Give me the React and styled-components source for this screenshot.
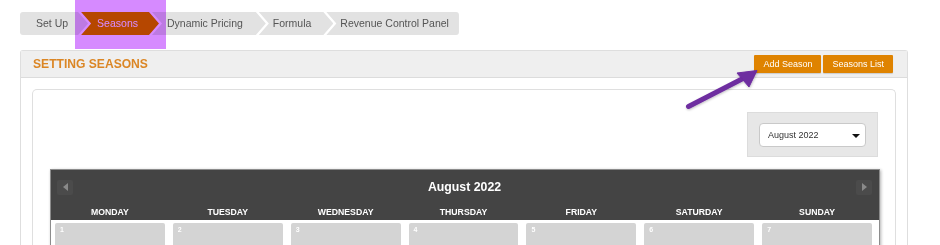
import React from "react";
import styled, { createGlobalStyle } from "styled-components";

const Global = createGlobalStyle`
  html, body { margin: 0; padding: 0; background: #fff; }
  body { font-family: "Liberation Sans", Arial, sans-serif; }
  * { box-sizing: border-box; }
`;

const Page = styled.div`
  position: relative;
  padding: 12px 32px 0 20px;
  height: 245px;
  overflow: hidden;
`;

const Crumbs = styled.nav`
  display: flex;
  height: 23px;
`;

const Crumb = styled.div`
  height: 23px;
  line-height: 23px;
  font-size: 10.5px;
  white-space: nowrap;
  color: ${(p) => (p.$active ? "#fff" : "#555")};
  background: ${(p) => (p.$active ? "#d98200" : "#e2e2e2")};
  padding: 0 ${(p) => p.$pr}px 0 ${(p) => p.$pl}px;
  margin-left: ${(p) => (p.$first ? 0 : -7)}px;
  border-radius: ${(p) => (p.$first ? "3px 0 0 3px" : p.$last ? "0 3px 3px 0" : "0")};
  clip-path: ${(p) =>
    p.$first
      ? "polygon(0 0, calc(100% - 10px) 0, 100% 50%, calc(100% - 10px) 100%, 0 100%)"
      : p.$last
      ? "polygon(0 0, 100% 0, 100% 100%, 0 100%, 10px 50%)"
      : "polygon(0 0, calc(100% - 10px) 0, 100% 50%, calc(100% - 10px) 100%, 0 100%, 10px 50%)"};
`;

const Highlight = styled.div`
  position: absolute;
  left: 75px;
  top: 0;
  width: 91px;
  height: 49px;
  background: #d68aff;
  mix-blend-mode: multiply;
  pointer-events: none;
`;

const Panel = styled.section`
  margin-top: 15px;
  width: 888px;
  border: 1px solid #dedede;
  border-radius: 3px 3px 0 0;
  border-bottom: none;
`;

const PanelHeader = styled.header`
  height: 27px;
  background: #efefef;
  border-bottom: 1px solid #dcdcdc;
  display: flex;
  align-items: center;
  justify-content: space-between;
  padding: 0 14px 0 12px;
`;

const PanelTitle = styled.h2`
  margin: 0;
  font-size: 12.1px;
  font-weight: bold;
  color: #db8625;
  letter-spacing: 0;
`;

const Actions = styled.div`
  display: flex;
  gap: 2px;
  margin-top: -1px;
`;

const ActionButton = styled.button`
  height: 18px;
  padding: 0 ${(p) => p.$px}px;
  font-family: inherit;
  font-size: 9px;
  color: #fff;
  background: #df8300;
  border: none;
  border-radius: 1px;
  box-shadow: 0 1px 1px rgba(0, 0, 0, 0.15);
  cursor: pointer;
`;

const PanelBody = styled.div`
  padding: 11px 11px 0 11px;
`;

const Card = styled.div`
  border: 1px solid #dfdfdf;
  border-bottom: none;
  border-radius: 5px 5px 0 0;
  padding: 22px 15px 0 17px;
  height: 170px;
`;

const FilterRow = styled.div`
  display: flex;
  justify-content: flex-end;
  padding-right: 2px;
`;

const FilterBox = styled.div`
  width: 131px;
  height: 45px;
  background: #e7e7e7;
  border: 1px solid #dcdcdc;
  padding: 10px 11px;
`;

const SelectBox = styled.div`
  height: 24px;
  background: #fff;
  border: 1px solid #c9c9c9;
  border-radius: 4px;
  display: flex;
  align-items: center;
  justify-content: space-between;
  padding: 0 5px 0 8px;
  font-size: 9px;
  color: #333;
`;

const Caret = styled.span`
  width: 0;
  height: 0;
  border-left: 4px solid transparent;
  border-right: 4px solid transparent;
  border-top: 4px solid #111;
  margin-top: 1px;
`;

const Calendar = styled.div`
  margin-top: 12px;
  border: 1px solid #8c8c8c;
  box-shadow: 1px 1px 3px rgba(0, 0, 0, 0.3);
  background: #fff;
`;

const CalHeader = styled.div`
  background: #444;
  padding: 8px 0 0 0;
`;

const NavRow = styled.div`
  display: grid;
  grid-template-columns: 16px 1fr 16px;
  align-items: center;
  height: 18px;
  padding: 0 7px 0 6px;
`;

const NavButton = styled.button`
  width: 16px;
  height: 15px;
  padding: 0;
  border: none;
  border-radius: 2px;
  background: #4b4b4b;
  display: flex;
  align-items: center;
  justify-content: center;
  cursor: pointer;
`;

const Tri = styled.span`
  width: 0;
  height: 0;
  border-top: 4px solid transparent;
  border-bottom: 4px solid transparent;
  ${(p) => (p.$dir === "left" ? "border-right: 5px solid #8a8a8a;" : "border-left: 5px solid #8a8a8a;")}
`;

const MonthTitle = styled.div`
  text-align: center;
  color: #fff;
  font-weight: bold;
  font-size: 12.3px;
`;

const DayGrid = styled.div`
  display: grid;
  grid-template-columns: repeat(7, 1fr);
  column-gap: 8px;
  padding: 0 7px 0 4px;
`;

const DayNames = styled(DayGrid)`
  margin-top: 8px;
  height: 16px;
  align-items: center;
`;

const DayName = styled.div`
  text-align: center;
  color: #fff;
  font-weight: bold;
  font-size: 8.7px;
`;

const Body = styled(DayGrid)`
  padding-top: 3px;
  padding-bottom: 6px;
`;

const Cell = styled.div`
  height: 70px;
  background: #d4d4d4;
  border-radius: 2px;
  padding: 3px 5px;
  color: #fff;
  font-size: 7px;
  font-weight: bold;
`;

const ArrowSvg = styled.svg`
  position: absolute;
  left: 680px;
  top: 60px;
  width: 90px;
  height: 56px;
  overflow: visible;
  pointer-events: none;
`;

const crumbs = [
  { label: "Set Up", pl: 16, pr: 20, first: true },
  { label: "Seasons", pl: 16, pr: 21, active: true },
  { label: "Dynamic Pricing", pl: 15, pr: 23 },
  { label: "Formula", pl: 14, pr: 22 },
  { label: "Revenue Control Panel", pl: 14, pr: 10, last: true },
];

const days = ["MONDAY", "TUESDAY", "WEDNESDAY", "THURSDAY", "FRIDAY", "SATURDAY", "SUNDAY"];

export default function App() {
  return (
    <>
      <Global />
      <Page>
        <Crumbs>
          {crumbs.map((c) => (
            <Crumb
              key={c.label}
              $pl={c.pl}
              $pr={c.pr}
              $first={c.first}
              $last={c.last}
              $active={c.active}
            >
              {c.label}
            </Crumb>
          ))}
        </Crumbs>
        <Highlight />
        <Panel>
          <PanelHeader>
            <PanelTitle>SETTING SEASONS</PanelTitle>
            <Actions>
              <ActionButton $px={9}>Add Season</ActionButton>
              <ActionButton $px={9}>Seasons List</ActionButton>
            </Actions>
          </PanelHeader>
          <PanelBody>
            <Card>
              <FilterRow>
                <FilterBox>
                  <SelectBox>
                    <span>August 2022</span>
                    <Caret />
                  </SelectBox>
                </FilterBox>
              </FilterRow>
              <Calendar>
                <CalHeader>
                  <NavRow>
                    <NavButton aria-label="Previous month">
                      <Tri $dir="left" />
                    </NavButton>
                    <MonthTitle>August 2022</MonthTitle>
                    <NavButton aria-label="Next month">
                      <Tri $dir="right" />
                    </NavButton>
                  </NavRow>
                  <DayNames>
                    {days.map((d) => (
                      <DayName key={d}>{d}</DayName>
                    ))}
                  </DayNames>
                </CalHeader>
                <Body>
                  {[1, 2, 3, 4, 5, 6, 7].map((n) => (
                    <Cell key={n}>{n}</Cell>
                  ))}
                </Body>
              </Calendar>
            </Card>
          </PanelBody>
        </Panel>
        <ArrowSvg viewBox="0 0 90 56">
          <defs>
            <filter id="ash" x="-20%" y="-20%" width="140%" height="140%">
              <feDropShadow dx="0.5" dy="1" stdDeviation="0.8" floodColor="#000" floodOpacity="0.25" />
            </filter>
          </defs>
          <g filter="url(#ash)" fill="#6e2da0" stroke="#6e2da0">
            <line x1="8.5" y1="46.5" x2="62" y2="19" strokeWidth="5" strokeLinecap="round" />
            <polygon points="57,13 77,10.5 69,27" strokeWidth="1" strokeLinejoin="round" />
          </g>
        </ArrowSvg>
      </Page>
    </>
  );
}
